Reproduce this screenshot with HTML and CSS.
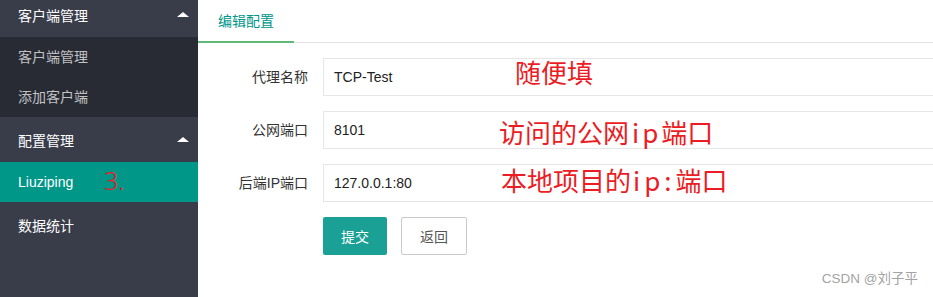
FILE: index.html
```html
<!DOCTYPE html>
<html lang="zh-CN">
<head>
<meta charset="utf-8">
<title>编辑配置</title>
<link rel="stylesheet" href="styles.css">
</head>
<body>
<aside class="side">
  <ul class="nav">
    <li class="nav-head"><span>客户端管理</span><i class="caret"></i></li>
    <li class="nav-child">
      <div class="child-item">客户端管理</div>
      <div class="child-item">添加客户端</div>
    </li>
    <li class="nav-head"><span>配置管理</span><i class="caret"></i></li>
    <li class="nav-child">
      <div class="child-item selected">Liuziping<span class="note note-3">3.</span></div>
    </li>
    <li class="nav-head"><span>数据统计</span></li>
  </ul>
</aside>
<main class="main">
  <ul class="tab-title">
    <li class="tab active">编辑配置</li>
  </ul>
  <form class="form">
    <div class="form-row">
      <label class="form-label">代理名称</label>
      <input class="form-input" type="text" value="TCP-Test" readonly>
      <span class="note note-1">随便填</span>
    </div>
    <div class="form-row">
      <label class="form-label">公网端口</label>
      <input class="form-input" type="text" value="8101" readonly>
      <span class="note note-2">访问的公网<span class="mid">ip</span>端口</span>
    </div>
    <div class="form-row">
      <label class="form-label">后端IP端口</label>
      <input class="form-input" type="text" value="127.0.0.1:80" readonly>
      <span class="note note-3b">本地项目的<span class="wide">ip:</span>端口</span>
    </div>
    <div class="form-actions">
      <button type="button" class="btn btn-primary">提交</button>
      <button type="button" class="btn btn-default">返回</button>
    </div>
  </form>
  <div class="watermark">CSDN @刘子平</div>
</main>
</body>
</html>
```
FILE: styles.css
```css
* { box-sizing: border-box; }
html, body {
  margin: 0;
  padding: 0;
  height: 100%;
}
body {
  display: flex;
  overflow: hidden;
  font-family: "Liberation Sans", "Noto Sans CJK SC", sans-serif;
  font-size: 14px;
  color: #333;
  background: #fff;
}
ul { list-style: none; margin: 0; padding: 0; }

.side {
  width: 198px;
  flex: none;
  height: 100%;
  background: #393d49;
  overflow: hidden;
}
.nav { margin-top: -8px; }
.nav-head {
  height: 45px;
  display: flex;
  align-items: center;
  justify-content: space-between;
  padding: 0 9px 0 18px;
  color: #fff;
}
.caret {
  width: 0;
  height: 0;
  border-left: 6px solid transparent;
  border-right: 6px solid transparent;
  border-bottom: 5px solid #fff;
}
.nav-child { background: #282b33; }
.child-item {
  position: relative;
  height: 40px;
  line-height: 40px;
  padding-left: 18px;
  color: rgba(255,255,255,0.72);
}
.child-item.selected {
  background: #009688;
  color: #fff;
}

.note {
  position: absolute;
  color: #ec1c24;
  font-family: "Noto Sans CJK SC", sans-serif;
  white-space: nowrap;
  font-size: 26px;
  line-height: 26px;
}
.note-3 {
  left: 104px;
  top: 6px;
  font-family: "Noto Sans", sans-serif;
  font-weight: 300;
  font-size: 25px;
  line-height: 25px;
}

.main {
  flex: 1;
  position: relative;
  overflow: hidden;
}
.tab-title {
  display: flex;
  height: 43px;
  border-bottom: 1px solid #e2e2e2;
}
.tab {
  position: relative;
  height: 42px;
  line-height: 42px;
  padding: 0 20px;
  color: #009688;
}
.tab.active::after {
  content: "";
  position: absolute;
  left: 0;
  right: 0;
  bottom: -1px;
  height: 2px;
  background: #5fb878;
}

.form { padding: 15px 0 0 15px; }
.form-row {
  position: relative;
  display: flex;
  margin-bottom: 15px;
  margin-right: -60px;
}
.form-label {
  width: 110px;
  flex: none;
  padding-right: 15px;
  text-align: right;
  line-height: 38px;
  color: #333;
}
.form-input {
  flex: 1;
  height: 38px;
  border: 1px solid #e6e6e6;
  padding: 0 10px;
  font-family: inherit;
  font-size: 14px;
  color: #222;
  background: #fff;
  outline: none;
}
.note-1 { left: 302px; top: 1px; }
.note-2 { left: 286px; top: 8px; }
.note-3b { left: 288px; top: 3px; }
.mid { letter-spacing: 3px; margin-left: 3px; }
.wide { letter-spacing: 4px; margin-left: 2px; }

.form-actions {
  display: flex;
  gap: 14px;
  padding-left: 110px;
}
.btn {
  height: 38px;
  border-radius: 2px;
  font-family: inherit;
  font-size: 14px;
  cursor: pointer;
}
.btn-primary {
  width: 64px;
  border: none;
  background: #1aa094;
  color: #fff;
}
.btn-default {
  width: 66px;
  border: 1px solid #c9c9c9;
  background: #fff;
  color: #555;
}

.watermark {
  position: absolute;
  right: 15px;
  bottom: 10px;
  font-size: 13.5px;
  color: #a3a3a3;
}
```
